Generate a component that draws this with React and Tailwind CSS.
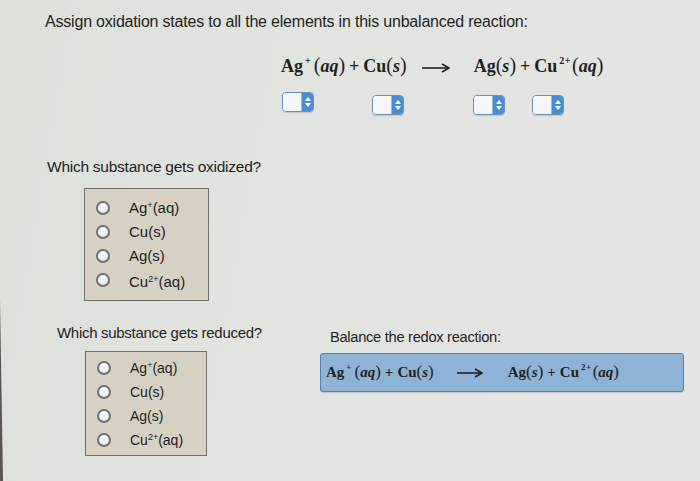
import React from "react";

const sans = { fontFamily: '"Liberation Sans", Arial, sans-serif' };

function Arrow({ w = 28 }) {
  return (
    <svg width={w} height="10" viewBox={`0 0 ${w} 10`} className="block">
      <line x1="0" y1="5" x2={w - 2} y2="5" stroke="#222" strokeWidth="1.6" />
      <path d={`M${w - 8} 1 L${w - 1} 5 L${w - 8} 9`} fill="none" stroke="#222" strokeWidth="1.6" strokeLinejoin="round" />
    </svg>
  );
}

// Chemical equation Ag+(aq) + Cu(s) -> Ag(s) + Cu2+(aq), typeset in a bold serif
function Equation({ big }) {
  const base = big ? "text-[18px]" : "text-[15px]";
  const sup = big ? "text-[10px] -translate-y-[8px]" : "text-[9px] -translate-y-[7px]";
  const paren = big ? "text-[20px] font-normal" : "text-[17px] font-normal";
  const Paren = ({ c }) => <span className={`${paren} leading-none`}>{c}</span>;
  return (
    <div
      className={`flex items-baseline font-bold text-[#1f1f1f] ${base} leading-[24px]`}
      style={{ fontFamily: '"Liberation Serif", "Times New Roman", serif' }}
    >
      <span>Ag</span>
      <span className={`${sup} ml-[2px] inline-block`}>+</span>
      <span className="ml-[3px]"><Paren c="(" /></span>
      <span className="italic">aq</span>
      <Paren c=")" />
      <span className="mx-[4px]">+</span>
      <span>Cu</span>
      <Paren c="(" />
      <span className="italic">s</span>
      <Paren c=")" />
      <span className={`${big ? "ml-[15px] mr-[24px]" : "ml-[23px] mr-[25px]"} self-center`}>
        <Arrow w={big ? 28 : 26} />
      </span>
      <span>Ag</span>
      <Paren c="(" />
      <span className="italic">s</span>
      <Paren c=")" />
      <span className="mx-[4px]">+</span>
      <span>Cu</span>
      <span className={`${sup} ml-[2px] inline-block tracking-[0.5px]`}>2+</span>
      <span className="ml-[1px]"><Paren c="(" /></span>
      <span className="italic">aq</span>
      <Paren c=")" />
    </div>
  );
}

// Small numeric stepper field
function Stepper() {
  return (
    <div className="flex shrink-0 w-[32px] h-[20px] rounded-[4px] border border-[#6a90c0] overflow-hidden shadow-[0_1px_1px_rgba(0,0,0,0.15)]">
      <div className="w-[19px] bg-[#f4f6f8] border-r border-[#9bb7d8]" />
      <div className="flex-1 bg-[#4a8dd4] flex flex-col items-center justify-center gap-[2px]">
        <svg width="6" height="4" viewBox="0 0 6 4"><path d="M3 0 L6 4 L0 4Z" fill="#fff" /></svg>
        <svg width="6" height="4" viewBox="0 0 6 4"><path d="M0 0 L6 0 L3 4Z" fill="#fff" /></svg>
      </div>
    </div>
  );
}

function Radio() {
  return (
    <span className="block w-[14px] h-[14px] rounded-full border-[2.5px] border-[#727272] bg-[radial-gradient(circle_at_50%_35%,#ffffff,#e2e2e2)] shrink-0" />
  );
}

function Choice({ children }) {
  return (
    <div className="flex items-center h-[24px]">
      <Radio />
      <span className="ml-[19px] text-[#1e1e1e]">{children}</span>
    </div>
  );
}

function Options({ small }) {
  const s = "text-[9px] relative -top-[5px]";
  return (
    <>
      <Choice>
        Ag<sup className={s}>+</sup>(aq)
      </Choice>
      <Choice>Cu(s)</Choice>
      <Choice>Ag(s)</Choice>
      <Choice>
        <span className={small ? "" : "relative top-[2px]"}>
          Cu<sup className={s}>2+</sup>(aq)
        </span>
      </Choice>
    </>
  );
}

export default function App() {
  return (
    <div
      className="relative w-[700px] h-[481px] overflow-hidden bg-[linear-gradient(100deg,#dde1da_0%,#e2e4e0_45%,#e6e4e6_100%)] flex flex-col"
      style={sans}
    >
      <p className="pl-[45px] pt-[12px] text-[16px] tracking-[-0.2px] leading-[19px] text-[#1f1f1f]">
        Assign oxidation states to all the elements in this unbalanced reaction:
      </p>

      <div className="ml-[281px] mt-[23px]">
        <Equation big />
      </div>

      <div className="flex ml-[282px] mt-[11px]">
        <Stepper />
        <div className="ml-[58px] mt-[3px]"><Stepper /></div>
        <div className="ml-[69px] mt-[3px]"><Stepper /></div>
        <div className="ml-[27px] mt-[3px]"><Stepper /></div>
      </div>

      <p className="pl-[47px] mt-[43px] text-[15.5px] tracking-[-0.25px] leading-[18px] text-[#1f1f1f]">
        Which substance gets oxidized?
      </p>
      <div className="ml-[84px] mt-[12px] w-[125px] h-[113px] bg-[#d6d1c3] border-[1.5px] border-[#6f6f6b] pl-[11px] pt-[7px] text-[15px] leading-[18px]">
        <Options />
      </div>

      <div className="flex mt-[23px]">
        <div className="w-[320px]">
          <p className="pl-[57px] text-[15px] tracking-[-0.3px] leading-[18px] text-[#1f1f1f]">
            Which substance gets reduced?
          </p>
          <div className="ml-[85px] mt-[9px] w-[122px] h-[105px] bg-[#d6d1c3] border-[1.5px] border-[#6f6f6b] pl-[11px] pt-[4px] text-[14px] leading-[18px]">
            <Options small />
          </div>
        </div>
        <div className="pt-[4px]">
          <p className="pl-[10px] text-[14.7px] tracking-[-0.3px] leading-[18px] text-[#1f1f1f]">
            Balance the redox reaction:
          </p>
          <div className="mt-[7px] w-[364px] h-[39px] rounded-[3px] bg-[#8db3d7] border border-[#5f7d9c] pl-[5px] flex items-center shadow-[0_1px_1px_rgba(0,0,0,0.15)]">
            <Equation />
          </div>
        </div>
      </div>

      {/* dark bezel edge along the lower left */}
      <svg className="absolute left-0 top-0" width="14" height="481" viewBox="0 0 14 481">
        <path d="M0 300 L3 481 L0 481Z" fill="#5a5552" />
      </svg>
    </div>
  );
}
